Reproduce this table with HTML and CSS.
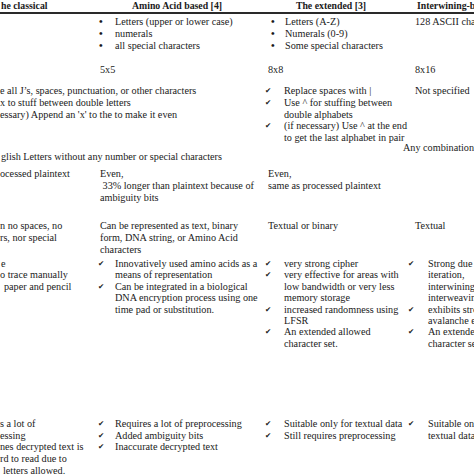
FILE: index.html
```html
<!DOCTYPE html>
<html>
<head>
<meta charset="utf-8">
<link rel="stylesheet" href="styles.css">
</head>
<body>
<div class="table">
  <!-- header -->
  <div class="th c1">he classical</div>
  <div class="th c2">Amino Acid based [4]</div>
  <div class="th c3">The extended [3]</div>
  <div class="th c4">Interwining-based [5]</div>

  <!-- row 1: character set -->
  <div class="cell r1 c1"></div>
  <div class="cell r1 c2">
    <div class="item bul"><span class="mk">•</span><span>Letters (upper or lower case)</span></div>
    <div class="item bul"><span class="mk">•</span><span>numerals</span></div>
    <div class="item bul"><span class="mk">•</span><span>all special characters</span></div>
  </div>
  <div class="cell r1 c3">
    <div class="item bul"><span class="mk">•</span><span>Letters (A-Z)</span></div>
    <div class="item bul"><span class="mk">•</span><span>Numerals (0-9)</span></div>
    <div class="item bul"><span class="mk">•</span><span>Some special characters</span></div>
  </div>
  <div class="cell r1 c4 plain">128 ASCII characters</div>

  <!-- row 2: matrix -->
  <div class="cell r2 c1"></div>
  <div class="cell r2 c2 plain">5x5</div>
  <div class="cell r2 c3 plain">8x8</div>
  <div class="cell r2 c4 plain">8x16</div>

  <!-- row 3: preprocessing -->
  <div class="cell r3 span12">
    <div>e all J’s, spaces, punctuation, or other characters</div>
    <div>x to stuff between double letters</div>
    <div>essary) Append an 'x' to the to make it even</div>
  </div>
  <div class="cell r3 c3">
    <div class="item chk"><span class="mk">✔</span><span>Replace spaces with |</span></div>
    <div class="item chk"><span class="mk">✔</span><span>Use ^ for stuffing between<br>double alphabets</span></div>
    <div class="item chk"><span class="mk">✔</span><span>(if necessary) Use ^ at the end<br>to get the last alphabet in pair</span></div>
  </div>
  <div class="cell r3 c4 plain">Not specified</div>

  <!-- row 4: plaintext -->
  <div class="cell r4 span13">glish Letters without any number or special characters</div>
  <div class="cell r4 c4 any">Any combination of ASCII characters</div>

  <!-- row 5: ciphertext length -->
  <div class="cell r5 c1">ocessed plaintext</div>
  <div class="cell r5 c2 plain">Even,<br>&nbsp;33% longer than plaintext because of<br>ambiguity bits</div>
  <div class="cell r5 c3 plain">Even,<br>same as processed plaintext</div>
  <div class="cell r5 c4"></div>

  <!-- row 6: ciphertext form -->
  <div class="cell r6 c1">n no spaces, no<br>rs, nor special</div>
  <div class="cell r6 c2 plain">Can be represented as text, binary<br>form, DNA string, or Amino Acid<br>characters</div>
  <div class="cell r6 c3 plain">Textual or binary</div>
  <div class="cell r6 c4 plain">Textual</div>

  <!-- row 7: advantages -->
  <div class="cell r7 c1"><span class="ind1">e</span><br>o trace manually<br><span class="ind4">paper and pencil</span></div>
  <div class="cell r7 c2">
    <div class="item chk"><span class="mk">✔</span><span>Innovatively used amino acids as a<br>means of representation</span></div>
    <div class="item chk"><span class="mk">✔</span><span>Can be integrated in a biological<br>DNA encryption process using one<br>time pad or substitution.</span></div>
  </div>
  <div class="cell r7 c3">
    <div class="item chk"><span class="mk">✔</span><span>very strong cipher</span></div>
    <div class="item chk"><span class="mk">✔</span><span>very effective for areas with<br>low bandwidth or very less<br>memory storage</span></div>
    <div class="item chk"><span class="mk">✔</span><span>increased randomness using<br>LFSR</span></div>
    <div class="item chk"><span class="mk">✔</span><span>An extended allowed<br>character set.</span></div>
  </div>
  <div class="cell r7 c4">
    <div class="item chk"><span class="mk">✔</span><span>Strong due to<br>iteration,<br>interwining and<br>interweaving</span></div>
    <div class="item chk"><span class="mk">✔</span><span>exhibits strong<br>avalanche effect</span></div>
    <div class="item chk"><span class="mk">✔</span><span>An extended<br>character set.</span></div>
  </div>

  <!-- row 8: disadvantages -->
  <div class="cell r8 c1">s a lot of<br>essing<br>nes decrypted text is<br>rd to read due to<br><span class="ind3">letters allowed.</span></div>
  <div class="cell r8 c2">
    <div class="item chk"><span class="mk">✔</span><span>Requires a lot of preprocessing</span></div>
    <div class="item chk"><span class="mk">✔</span><span>Added ambiguity bits</span></div>
    <div class="item chk"><span class="mk">✔</span><span>Inaccurate decrypted text</span></div>
  </div>
  <div class="cell r8 c3">
    <div class="item chk"><span class="mk">✔</span><span>Suitable only for textual data</span></div>
    <div class="item chk"><span class="mk">✔</span><span>Still requires preprocessing</span></div>
  </div>
  <div class="cell r8 c4">
    <div class="item chk"><span class="mk">✔</span><span>Suitable only for<br>textual data.</span></div>
  </div>
</div>
</body>
</html>
```

FILE: styles.css
```css
html, body {
  margin: 0;
  padding: 0;
  background: #ffffff;
}

body {
  width: 474px;
  height: 474px;
  overflow: hidden;
  font-family: "Liberation Serif", "Times New Roman", serif;
  font-size: 10.2px;
  line-height: 11.6px;
  color: #1a1a1a;
}

.table {
  display: grid;
  grid-template-columns: 97px 166px 142px 69px;
  grid-template-rows: 14px 48px 21px 57px 25px 52px 37px 160px 58px;
  white-space: nowrap;
}

.th {
  font-weight: bold;
  font-size: 9.8px;
  line-height: 12px;
  border-bottom: 2px solid #2a2a2a;
}

.th.c1 { text-align: left; padding-left: 1px; }
.th.c2 { text-align: center; padding-right: 6px; }
.th.c3 { text-align: center; padding-right: 6px; }
.th.c4 { padding-left: 12px; }

.cell {
  overflow: visible;
}

.c1 { grid-column: 1; }
.c2 { grid-column: 2; }
.c3 { grid-column: 3; }
.c4 { grid-column: 4; }
.span12 { grid-column: 1 / 3; }
.span13 { grid-column: 1 / 4; padding-left: 1px; }

.r1 { padding-top: 2px; line-height: 12px; }
.r2 { padding-top: 2px; }
.r3 { padding-top: 2px; line-height: 11.8px; }
.r4.span13 { padding-top: 11px; }
.r4.any { padding-top: 2px; margin-left: -2px; }
.r5 { padding-top: 3px; line-height: 12px; }
.r6 { padding-top: 3px; line-height: 12px; }
.r7 { padding-top: 4px; line-height: 11.4px; }
.r8 { padding-top: 4px; line-height: 11.7px; }

.plain.c2 { padding-left: 3px; }
.plain.c3 { padding-left: 5px; }
.plain.c4 { padding-left: 10px; }

.item {
  display: flex;
}

.item .mk {
  flex: none;
  box-sizing: border-box;
}

.bul .mk {
  font-size: 10.5px;
  line-height: 12px;
  font-weight: bold;
}

.c2 .bul .mk { width: 18px; padding-left: 2px; }
.c3 .bul .mk { width: 22px; padding-left: 8px; }

.chk .mk {
  font-family: "DejaVu Sans", sans-serif;
  font-size: 7.5px;
  color: #222;
}

.c2 .chk .mk { width: 18px; padding-left: 1px; }
.c3 .chk .mk { width: 21px; padding-left: 2px; }
.c4 .chk .mk { width: 23px; padding-left: 3px; }

.ind1 { padding-left: 1px; }
.ind3 { padding-left: 3px; }
.ind4 { padding-left: 4px; }
```
